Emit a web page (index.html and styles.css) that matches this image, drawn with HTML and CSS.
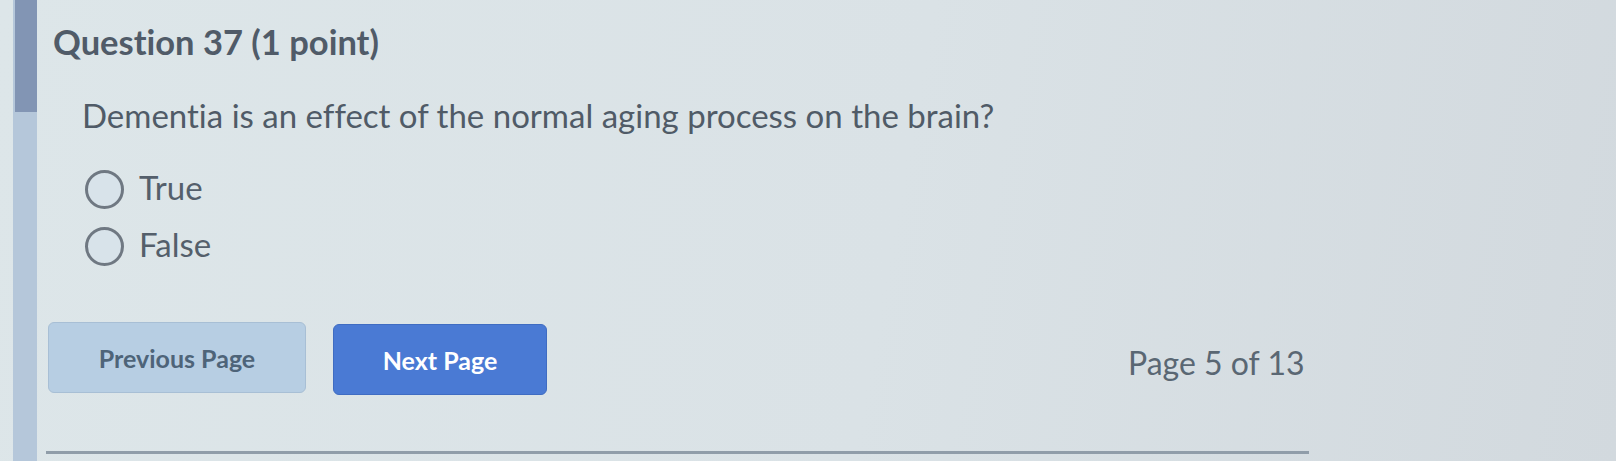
FILE: index.html
```html
<!DOCTYPE html>
<html lang="en">
<head>
    <meta charset="UTF-8">
    <meta name="viewport" content="width=device-width, initial-scale=1.0">
    <title>Quiz - Question 37</title>
    <link rel="stylesheet" href="styles.css">
</head>
<body>
    <div class="page">
        <div class="scroll-track">
            <div class="scroll-thumb"></div>
        </div>

        <main class="quiz">
            <h2 class="question-title">Question 37 (1 point)</h2>
            <p class="question-text">Dementia is an effect of the normal aging process on the brain?</p>

            <div class="options">
                <label class="option">
                    <span class="radio"></span>
                    <span class="option-label">True</span>
                </label>
                <label class="option">
                    <span class="radio"></span>
                    <span class="option-label">False</span>
                </label>
            </div>

            <div class="pager">
                <button class="btn btn-prev">Previous Page</button>
                <button class="btn btn-next">Next Page</button>
                <span class="page-count">Page 5 of 13</span>
            </div>

            <hr class="divider">
        </main>
    </div>
</body>
</html>
```

FILE: styles.css
```css
body {
    margin: 0;
    padding: 0;
    height: 100vh;
    overflow: hidden;
    font-family: 'Lato', 'Open Sans', sans-serif;
    font-variant-ligatures: none;
    color: #4c5764;
    background: linear-gradient(100deg, #dde6e9 0%, #dae2e6 55%, #d2d9de 100%);
}

.page {
    display: flex;
    height: 100%;
}

/* left rail */
.scroll-track {
    width: 24px;
    margin-left: 13px;
    height: 100%;
    background-color: #b5c7da;
}

.scroll-thumb {
    height: 112px;
    margin-left: 2px;
    background-color: #8295b4;
}

.quiz {
    flex: 1;
    padding-left: 11px;
}

.question-title {
    margin: 22px 0 0 5px;
    font-size: 34.5px;
    line-height: 40px;
    font-weight: 700;
    color: #505b68;
}

.question-text {
    margin: 33px 0 0 34px;
    font-size: 33px;
    line-height: 40px;
    color: #505b67;
}

.options {
    margin: 35px 0 0 37px;
    display: flex;
    flex-direction: column;
    gap: 19px;
}

.option {
    display: flex;
    align-items: center;
    gap: 15px;
    height: 38px;
}

.radio {
    width: 33px;
    height: 33px;
    border: 3px solid #6f7882;
    border-radius: 50%;
    background-color: #d8e3ea;
}

.option-label {
    font-size: 33px;
    line-height: 38px;
    color: #545f6b;
    margin-top: -4px;
}

.pager {
    display: flex;
    align-items: center;
    margin-top: 55px;
}

.btn {
    height: 71px;
    border-radius: 6px;
    font-family: inherit;
    font-size: 25px;
    font-weight: 700;
    cursor: pointer;
}

.btn-prev {
    width: 258px;
    background-color: #b7cee3;
    border: 1px solid #a8bfd5;
    color: #4e6479;
}

.btn-next {
    width: 214px;
    margin-left: 27px;
    margin-top: 4px;
    background-color: #4a7ad4;
    border: 1px solid #3f6cc2;
    color: #ffffff;
}

.page-count {
    margin-left: 581px;
    margin-top: 10px;
    font-size: 32px;
    color: #5a6773;
}

.divider {
    width: 1263px;
    margin: 56px 0 0 -2px;
    border: none;
    height: 3px;
    background-color: #909da9;
}
```
